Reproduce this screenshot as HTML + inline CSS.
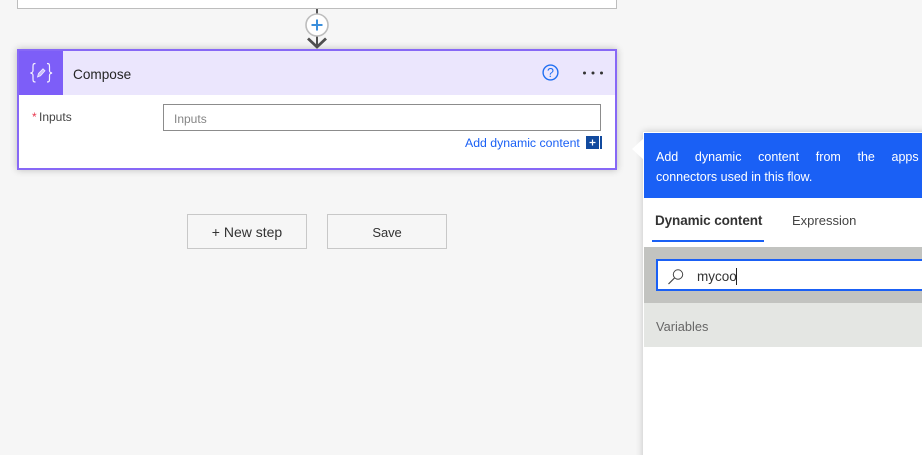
<!DOCTYPE html>
<html>
<head>
<meta charset="utf-8">
<style>
html,body{margin:0;padding:0;width:922px;height:455px;overflow:hidden;background:#f6f6f6;font-family:"Liberation Sans",sans-serif;color:#333}
#r{position:absolute;left:0;top:0;width:922px;height:455px;overflow:hidden;background:#f6f6f6}
#r div,#r span{position:absolute;box-sizing:border-box;white-space:nowrap}
svg{position:absolute;overflow:visible}
</style>
</head>
<body>
<div id="r">
<!-- previous card -->
<div style="left:17px;top:-10px;width:600px;height:19px;background:#fff;border:1px solid #bdbdbd"></div>

<!-- compose card -->
<div style="left:17px;top:49px;width:600px;height:121px;background:#fff;border:2px solid #8768f6;box-shadow:0 0 7px rgba(0,0,0,.24)"></div>
<div style="left:19px;top:51px;width:596px;height:44px;background:#ebe6fd"></div>
<div style="left:19px;top:51px;width:44px;height:44px;background:#7d5ef8"></div>

<!-- connector -->
<svg style="left:0;top:0" width="922" height="60">
<rect x="316" y="9" width="2" height="5" fill="#555"/>
<rect x="316" y="36" width="2" height="12" fill="#4f4f4f"/>
<path d="M308 38.500L317 47L326 38.500" stroke="#4f4f4f" stroke-width="2.800" fill="none"/>
<circle cx="317" cy="25" r="11" fill="#fff" stroke="#bdbdbd" stroke-width="1.600"/>
<path d="M311.500 25H322.500M317 19.500V30.500" stroke="#3b8fdc" stroke-width="2" fill="none"/>
</svg>

<svg style="left:19px;top:51px" width="44" height="44" viewBox="0 0 44 44">
<path d="M16.500 12.500C14 12.500 14 13.500 14 16V19.500C14 21 13.500 21.500 11.500 22C13.500 22.500 14 23 14 24.500V27.500C14 30 14 31 16.500 31" fill="none" stroke="#f6f3ff" stroke-width="1.200"/>
<path d="M28 12.500C30.500 12.500 30.500 13.500 30.500 16V19.500C30.500 21 31 21.500 33 22C31 22.500 30.500 23 30.500 24.500V27.500C30.500 30 30.500 31 28 31" fill="none" stroke="#f6f3ff" stroke-width="1.200"/>
<path d="M18.500 26L19.500 22.500L24 17.800L26 19.800L21.500 24.800Z" fill="#c9bcfb" stroke="#f1edff" stroke-width=".8"/>
</svg>
<div style="left:73px;top:67px;font-size:13.600px;line-height:16px;color:#252525">Compose</div>
<svg style="left:542px;top:64px" width="18" height="18" viewBox="0 0 18 18">
<circle cx="8.500" cy="8.500" r="7.400" fill="none" stroke="#1f6ff2" stroke-width="1.400"/>
<text x="8.500" y="13" font-family="Liberation Sans" font-size="12.500" text-anchor="middle" fill="#1f6ff2">?</text>
</svg>
<svg style="left:580px;top:68px" width="26" height="10">
<circle cx="4.500" cy="5" r="1.500" fill="#333"/><circle cx="13" cy="5" r="1.500" fill="#333"/><circle cx="21.500" cy="5" r="1.500" fill="#333"/>
</svg>
<div style="left:32px;top:110px;font-size:12px;line-height:15px;color:#e8384f">*</div>
<div style="left:39px;top:110px;font-size:12px;line-height:15px;color:#444">Inputs</div>
<div style="left:163px;top:104px;width:438px;height:27px;background:#fff;border:1px solid #8c8c8c"></div>
<div style="left:174px;top:112px;font-size:12px;line-height:15px;color:#858585">Inputs</div>
<div style="left:465px;top:135px;font-size:12.300px;line-height:16px;color:#1a60f5">Add dynamic content</div>
<div style="left:586px;top:136px;width:13px;height:13px;background:#124a9e"></div>
<div style="left:600px;top:136px;width:2px;height:13px;background:#124a9e"></div>
<svg style="left:586px;top:136px" width="13" height="13"><path d="M3.500 6.500H9.500M6.500 3.500V9.500" stroke="#fff" stroke-width="1.200"/></svg>

<!-- buttons -->
<div style="left:187px;top:214px;width:120px;height:35px;border:1px solid #c8c8c8;background:#f6f6f6;font-size:14px;line-height:35px;text-align:center;color:#333">+ New step</div>
<div style="left:327px;top:214px;width:120px;height:35px;border:1px solid #c8c8c8;background:#f6f6f6;font-size:13px;line-height:35px;text-align:center;color:#333;letter-spacing:-.1px">Save</div>

<!-- panel -->
<div style="left:643px;top:132px;width:290px;height:340px;background:#fff;box-shadow:0 0 7px rgba(0,0,0,.22)"></div>
<svg style="left:631px;top:137px" width="14" height="24"><path d="M1 12L13 1V23Z" fill="#fff"/></svg>
<div style="left:644px;top:133px;width:278px;height:65px;background:#1a60f5"></div>
<div style="left:656px;top:149px;font-size:12.500px;line-height:17px;color:#fff;word-spacing:13.200px">Add dynamic content from the apps</div>
<div style="left:656px;top:169px;font-size:12.500px;line-height:17px;color:#fff">connectors used in this flow.</div>
<div style="left:655px;top:212px;font-size:13.500px;line-height:17px;font-weight:bold;color:#333;letter-spacing:-.1px">Dynamic content</div>
<div style="left:792px;top:212px;font-size:13px;line-height:17px;color:#444">Expression</div>
<div style="left:652px;top:240px;width:112px;height:2px;background:#1a60f5"></div>
<div style="left:644px;top:247px;width:278px;height:56px;background:#c2c3c0"></div>
<div style="left:656px;top:259px;width:280px;height:32px;background:#fff;border:2px solid #1a60f5"></div>
<svg style="left:667px;top:268px" width="18" height="18" viewBox="0 0 18 18">
<circle cx="11" cy="6.500" r="4.700" fill="none" stroke="#444" stroke-width="1"/>
<path d="M7.500 10L1.500 16" stroke="#444" stroke-width="1.200" fill="none"/>
</svg>
<div style="left:697px;top:268px;font-size:13.500px;line-height:17px;color:#333">mycoo</div>
<div style="left:736px;top:268px;width:1px;height:17px;background:#222"></div>
<div style="left:644px;top:303px;width:278px;height:44px;background:#e4e6e3"></div>
<div style="left:656px;top:319px;font-size:12.800px;line-height:16px;color:#666">Variables</div>
</div>
</body>
</html>
